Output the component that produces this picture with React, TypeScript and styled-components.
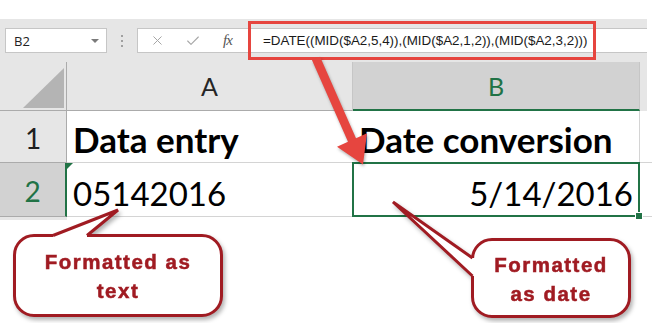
import React from 'react';
import styled, { createGlobalStyle } from 'styled-components';
import { X, Check } from 'lucide-react';

const GlobalStyle = createGlobalStyle`
  html, body {
    margin: 0;
    padding: 0;
    background: #ffffff;
  }
  * {
    box-sizing: border-box;
  }
`;

const excelGreen = '#217346';
const calloutRed = '#a01b22';
const markerRed = '#e6453f';

const Page = styled.div`
  position: relative;
  width: 663px;
  height: 323px;
  background: #ffffff;
  overflow: hidden;
  font-family: 'Lato', 'Open Sans', sans-serif;
`;

const Sheet = styled.div`
  width: 647px;
  padding-top: 19px;
`;

const FormulaBar = styled.div`
  display: flex;
  align-items: center;
  height: 43px;
  padding-left: 5px;
  background: #e6e6e6;
`;

const NameBox = styled.div`
  display: flex;
  align-items: center;
  justify-content: space-between;
  width: 102px;
  height: 25px;
  padding: 0 7px 0 8px;
  background: #ffffff;
  border: 1px solid #c6c6c6;
  font-family: 'Open Sans', 'Liberation Sans', sans-serif;
  font-size: 13px;
  color: #222222;
`;

const DropArrow = styled.span`
  width: 0;
  height: 0;
  border-left: 4px solid transparent;
  border-right: 4px solid transparent;
  border-top: 4px solid #7a7a7a;
`;

const Grip = styled.div`
  display: flex;
  flex-direction: column;
  gap: 3px;
  margin-left: 14px;

  span {
    width: 2px;
    height: 2px;
    background: #a0a0a0;
  }
`;

const FormulaInput = styled.div`
  position: relative;
  display: flex;
  align-items: center;
  flex: 1;
  height: 25px;
  margin-left: 14px;
  padding-left: 2px;
  background: #ffffff;
  border: 1px solid #c6c6c6;
  border-right: none;
`;

const IconSlot = styled.div`
  display: flex;
  align-items: center;
  justify-content: center;
  width: 35px;
  color: #a6a6a6;
`;

const Fx = styled.span`
  font-family: 'Liberation Serif', serif;
  font-style: italic;
  font-size: 15px;
  color: #555555;
  letter-spacing: -1px;
`;

const FormulaText = styled.span`
  margin-left: 18px;
  font-family: 'Liberation Sans', sans-serif;
  font-size: 13.4px;
  color: #1a1a1a;
  white-space: nowrap;
`;

const Highlight = styled.div`
  position: absolute;
  left: 110px;
  top: -8px;
  width: 348px;
  height: 39px;
  border: 3px solid ${markerRed};
  pointer-events: none;
`;

const Grid = styled.div`
  display: grid;
  grid-template-columns: 67px 286px 287px 7px;
  grid-template-rows: 49px 52px 54px 3px;
`;

const Corner = styled.div`
  position: relative;
  background: #e6e6e6;
  border-right: 1px solid #ababab;
  border-bottom: 1px solid #ababab;

  &::after {
    content: '';
    position: absolute;
    right: 2px;
    bottom: 2px;
    width: 41px;
    height: 40px;
    background: #b4b4b4;
    clip-path: polygon(100% 0, 100% 100%, 0 100%);
  }
`;

const ColumnHeader = styled.div<{ $active?: boolean }>`
  display: flex;
  align-items: center;
  justify-content: center;
  background: ${(p) => (p.$active ? '#d2d2d2' : '#e6e6e6')};
  color: ${(p) => (p.$active ? excelGreen : '#262626')};
  border-right: 1px solid #c6c6c6;
  border-bottom: ${(p) => (p.$active ? `2px solid ${excelGreen}` : '1px solid #ababab')};
  font-size: 25px;
`;

const RowHeader = styled.div<{ $active?: boolean }>`
  display: flex;
  align-items: center;
  justify-content: center;
  padding-top: 2px;
  background: ${(p) => (p.$active ? '#d2d2d2' : '#e6e6e6')};
  color: ${(p) => (p.$active ? excelGreen : '#1f1f1f')};
  border-right: ${(p) => (p.$active ? `2px solid ${excelGreen}` : '1px solid #ababab')};
  border-bottom: 1px solid #ababab;
  font-size: 28px;
`;

const Cell = styled.div<{ $right?: boolean; $bold?: boolean; $edge?: boolean }>`
  position: relative;
  display: flex;
  align-items: flex-end;
  justify-content: ${(p) => (p.$right ? 'flex-end' : 'flex-start')};
  padding: 0 6px ${(p) => (p.$bold ? 5 : 6)}px;
  background: #ffffff;
  border-bottom: 1px solid #d4d4d4;
  border-right: ${(p) => (p.$edge ? '1px solid #d4d4d4' : 'none')};
  color: #000000;
  font-size: ${(p) => (p.$bold ? 35 : 33)}px;
  font-weight: ${(p) => (p.$bold ? 700 : 400)};
  line-height: 1;
  white-space: nowrap;
`;

const TextFlag = styled(Cell)`
  &::before {
    content: '';
    position: absolute;
    left: 0;
    top: 0;
    width: 6px;
    height: 6px;
    background: ${excelGreen};
    clip-path: polygon(0 0, 100% 0, 0 100%);
  }
`;

const SelectedCell = styled(Cell)`
  &::after {
    content: '';
    position: absolute;
    left: -1px;
    top: -1px;
    right: -1px;
    bottom: -1px;
    border: 2px solid ${excelGreen};
  }

  &::before {
    content: '';
    position: absolute;
    right: -4px;
    bottom: -4px;
    width: 6px;
    height: 6px;
    background: ${excelGreen};
    border: 1px solid #ffffff;
    z-index: 1;
  }
`;

const Blank = styled.div<{ $header?: boolean }>`
  background: ${(p) => (p.$header ? '#e6e6e6' : '#ffffff')};
`;

const Overlay = styled.svg`
  position: absolute;
  left: 0;
  top: 0;
  width: 663px;
  height: 323px;
  pointer-events: none;
  filter: drop-shadow(1px 2px 1.5px rgba(0, 0, 0, 0.3));
`;

const Callout = styled.div<{ $x: number; $y: number; $w: number; $h: number }>`
  position: absolute;
  left: ${(p) => p.$x}px;
  top: ${(p) => p.$y}px;
  width: ${(p) => p.$w}px;
  height: ${(p) => p.$h}px;
  display: flex;
  flex-direction: column;
  align-items: center;
  justify-content: center;
  padding-top: 1px;
  background: #ffffff;
  border: 3px solid ${calloutRed};
  border-radius: 21px;
  filter: drop-shadow(2px 3px 2px rgba(0, 0, 0, 0.3));
  color: ${calloutRed};
  font-family: 'Liberation Sans', Arial, sans-serif;
  font-weight: 700;
  font-size: 20.5px;
  letter-spacing: 1.5px;
  line-height: 29px;
  text-align: center;
  -webkit-text-stroke: 0.5px ${calloutRed};
`;

const Tail = styled.svg`
  position: absolute;
  left: -3px;
  top: -3px;
  width: 1px;
  height: 1px;
  overflow: visible;
`;

type TailProps = { fill: string; stroke: string };

const CalloutTail: React.FC<TailProps> = ({ fill, stroke }) => (
  <Tail>
    <path d={fill} fill="#ffffff" />
    <path d={stroke} fill="none" stroke={calloutRed} strokeWidth={3} strokeLinejoin="miter" />
  </Tail>
);

const App: React.FC = () => {
  return (
    <Page>
      <GlobalStyle />
      <Sheet>
        <FormulaBar>
          <NameBox>
            B2
            <DropArrow />
          </NameBox>
          <Grip>
            <span />
            <span />
            <span />
          </Grip>
          <FormulaInput>
            <IconSlot>
              <X size={15} strokeWidth={1.6} />
            </IconSlot>
            <IconSlot>
              <Check size={16} strokeWidth={1.6} />
            </IconSlot>
            <IconSlot>
              <Fx>fx</Fx>
            </IconSlot>
            <FormulaText>=DATE((MID($A2,5,4)),(MID($A2,1,2)),(MID($A2,3,2)))</FormulaText>
            <Highlight />
          </FormulaInput>
        </FormulaBar>

        <Grid>
          <Corner />
          <ColumnHeader>A</ColumnHeader>
          <ColumnHeader $active>B</ColumnHeader>
          <Blank $header />

          <RowHeader>1</RowHeader>
          <Cell $bold>Data entry</Cell>
          <Cell $bold $edge>Date conversion</Cell>
          <Cell />

          <RowHeader $active>2</RowHeader>
          <TextFlag>05142016</TextFlag>
          <SelectedCell $right $edge>5/14/2016</SelectedCell>
          <Cell />

          <Blank $header />
          <Blank />
          <Blank />
          <Blank />
        </Grid>
      </Sheet>

      <Overlay viewBox="0 0 663 323">
        <polygon
          points="311.9,60 320.1,56.8 356,138.2 367,133.3 363,164.6 337,146.7 348,141.8"
          fill={markerRed}
        />
      </Overlay>

      <Callout $x={13} $y={234} $w={210} $h={83}>
        <CalloutTail fill="M40 0 L105 -24 L74 0 L74 4 L40 4 Z" stroke="M40 1.5 L105 -24 L74 1.5" />
        <span>Formatted as</span>
        <span>text</span>
      </Callout>

      <Callout $x={471} $y={238} $w={160} $h={80}>
        <CalloutTail fill="M0 20 L-78 -36 L0 38 L4 38 L4 20 Z" stroke="M1.5 20 L-78 -36 L1.5 38" />
        <span>Formatted</span>
        <span>as date</span>
      </Callout>
    </Page>
  );
};

export default App;
